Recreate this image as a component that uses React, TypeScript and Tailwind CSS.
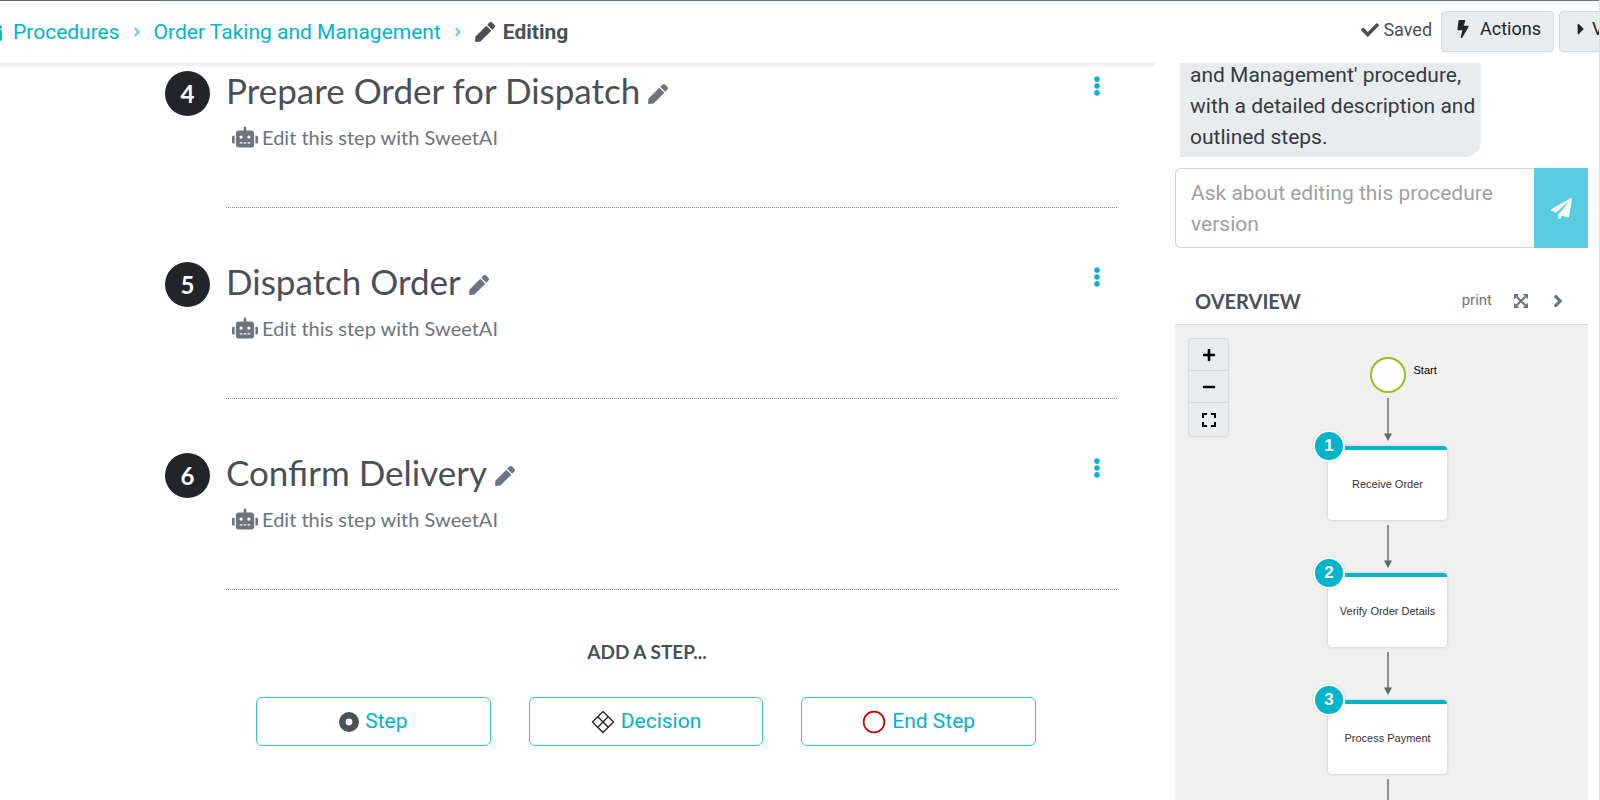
import { FaAngleRight, FaBolt, FaCalendar, FaCaretRight, FaCheck, FaEllipsisV, FaMinus, FaPaperPlane, FaPen, FaPlus, FaRobot } from 'react-icons/fa'

type Step = { number: number; title: string }

const steps: Step[] = [
  { number: 4, title: 'Prepare Order for Dispatch' },
  { number: 5, title: 'Dispatch Order' },
  { number: 6, title: 'Confirm Delivery' },
]

const overviewNodes: Step[] = [
  { number: 1, title: 'Receive Order' },
  { number: 2, title: 'Verify Order Details' },
  { number: 3, title: 'Process Payment' },
]

function StepIcon() {
  return (
    <svg className="size-5" viewBox="0 0 20 20" aria-hidden="true">
      <circle cx="10" cy="10" r="6.7" fill="none" stroke="#495057" strokeWidth="6.6" />
    </svg>
  )
}

function DecisionIcon() {
  return (
    <svg className="size-6" viewBox="0 0 24 24" fill="none" stroke="#212529" strokeWidth="1.4" aria-hidden="true">
      <path d="M12 1.5 22.5 12 12 22.5 1.5 12Z" />
      <path d="m6.8 6.8 10.4 10.4M17.2 6.8 6.8 17.2" />
    </svg>
  )
}

function EndIcon() {
  return (
    <svg className="size-6" viewBox="0 0 24 24" fill="none" aria-hidden="true">
      <circle cx="12" cy="12" r="10.4" stroke="#cc0000" strokeWidth="1.7" />
    </svg>
  )
}

function MaximizeIcon() {
  return (
    <svg className="size-3.5" viewBox="0 0 14 14" aria-hidden="true">
      <path d="M2.5 2.5l9 9M11.5 2.5l-9 9" stroke="currentColor" strokeWidth="2.1" />
      <path d="M0 0h5.2L0 5.2ZM14 0v5.2L8.8 0ZM0 14V8.8L5.2 14ZM14 14H8.8L14 8.8Z" fill="currentColor" />
    </svg>
  )
}

function FitIcon() {
  return (
    <svg className="size-3.5" viewBox="0 0 14 14" fill="none" stroke="currentColor" strokeWidth="2" aria-hidden="true">
      <path d="M1 5V1h4M9 1h4v4M13 9v4H9M5 13H1V9" />
    </svg>
  )
}

function Header() {
  return (
    <header className="shrink-0 overflow-hidden bg-white">
      <div className="flex h-px">
        <span className="w-1/10 bg-[#66666c]" />
        <span className="flex-1 bg-[#4f7f8b]" />
      </div>
      <div className="flex h-[62px] items-center">
        <nav aria-label="Breadcrumb" className="flex min-w-0 flex-1 items-center whitespace-nowrap text-[21px] leading-8 text-[#00b4cc]">
          <a href="#procedures" className="flex items-center gap-2.5">
            <FaCalendar className="-ml-[15px] size-[18px]" />
            Procedures
          </a>
          <FaAngleRight className="mx-[10px] size-3.5 opacity-60" />
          <a href="#procedure">Order Taking and Management</a>
          <FaAngleRight className="mx-[10px] size-3.5 opacity-60" />
          <span className="flex items-center gap-2 font-bold text-[#495057]">
            <FaPen className="size-5" />
            Editing
          </span>
        </nav>
        <div className="-mr-[56px] flex shrink-0 items-center gap-[5px] pb-0.5 text-lg">
          <span className="flex items-center gap-1 pr-1 pb-0.5 text-[#495057]">
            <FaCheck className="size-[18px]" />
            Saved
          </span>
          <button type="button" className="flex h-[41px] items-center gap-2 rounded border border-[#d3dae0] bg-[#e9ecef] px-3 pb-1 text-[#212529] shadow-xs">
            <FaBolt className="size-[18px]" />
            Actions
          </button>
          <button type="button" className="flex h-[41px] w-24 items-center gap-0.5 rounded border border-[#d3dae0] bg-[#e9ecef] px-3 pb-1 text-[#212529] shadow-xs">
            <FaCaretRight className="size-[18px]" />
            View
          </button>
        </div>
      </div>
    </header>
  )
}

function StepRow({ step }: { step: Step }) {
  return (
    <li className="flex gap-4">
      <span className="flex size-[45px] shrink-0 items-center justify-center rounded-full bg-[#212529] font-[Lato] text-2xl font-bold text-white">
        {step.number}
      </span>
      <div className="flex h-[137px] flex-1 justify-between border-b border-dotted border-[#868e96] font-[Lato]">
        <div>
          <h2 className="flex h-[38px] items-center gap-2 text-[35px] text-[#495057]">
            {step.title}
            <button type="button" aria-label={`Rename ${step.title}`} className="pt-2 text-[#6c757d]">
              <FaPen className="size-5" />
            </button>
          </h2>
          <button type="button" className="mt-3 flex items-center gap-1 pl-1.5 text-xl leading-8 text-[#6c757d]">
            <FaRobot className="size-[26px]" />
            Edit this step with SweetAI
          </button>
        </div>
        <button type="button" aria-label={`Options for ${step.title}`} className="mt-[3px] mr-2 flex size-6 items-center justify-center text-[#00b4cc]">
          <FaEllipsisV className="size-5" />
        </button>
      </div>
    </li>
  )
}

function AddStep() {
  return (
    <section className="mr-[26px] mt-[42px] flex flex-col items-center">
      <h3 className="font-[Lato] text-[19px] font-bold leading-10 text-[#495057]">ADD A STEP...</h3>
      <div className="mt-[25px] grid w-full grid-cols-3 gap-[38px] pl-[91px] pr-[93px] text-[21px] text-[#00b4cc]">
        <button type="button" className="flex h-[49px] items-center justify-center gap-1.5 rounded-md border border-[#35c3d6]">
          <StepIcon />
          Step
        </button>
        <button type="button" className="flex h-[49px] items-center justify-center gap-1.5 rounded-md border border-[#35c3d6]">
          <DecisionIcon />
          Decision
        </button>
        <button type="button" className="flex h-[49px] items-center justify-center gap-1.5 rounded-md border border-[#35c3d6]">
          <EndIcon />
          End Step
        </button>
      </div>
    </section>
  )
}

function Chat() {
  return (
    <div>
      {/* message list, kept at its latest lines */}
      <div className="flex h-[94px] items-end overflow-hidden pl-[5px]">
        <p className="w-[301px] rounded-br-2xl bg-[#e9ecef] pb-1 pl-2.5 text-[21px] leading-[31px] text-[#343a40]">
          and Management' procedure, with a detailed description and outlined steps.
        </p>
      </div>
      <form className="mt-[11px] flex h-20">
        <textarea
          aria-label="Ask about editing this procedure version"
          placeholder="Ask about editing this procedure version"
          className="min-w-0 flex-1 resize-none rounded-l-md border border-r-0 border-[#ced4da] px-[15px] py-[9px] text-[21px] leading-[31px] placeholder:text-[#a0a0a0]"
        />
        <button type="submit" aria-label="Send" className="flex w-[54px] items-center justify-center bg-[#59cddf] text-white">
          <FaPaperPlane className="size-[21px]" />
        </button>
      </form>
    </div>
  )
}

function Arrow() {
  return (
    <svg className="my-[5px] h-[43px] w-3" viewBox="0 0 12 43" aria-hidden="true">
      <path d="M6 0v38" stroke="#7f8886" strokeWidth="1.8" />
      <path d="M2 35.5h8L6 43Z" fill="#5f6b69" />
    </svg>
  )
}

function Overview() {
  return (
    <section className="mt-[27px] flex min-h-0 flex-1 flex-col">
      <div className="flex h-[50px] items-center border-b border-[#dcdcdc] px-5 pt-0.5 text-[#6c757d]">
        <h3 className="flex-1 font-[Lato] text-xl font-bold text-[#495057]">OVERVIEW</h3>
        <button type="button" className="text-[15px]">print</button>
        <button type="button" aria-label="Maximize" className="ml-[22px]"><MaximizeIcon /></button>
        <button type="button" aria-label="Collapse" className="ml-5"><FaAngleRight className="size-5" /></button>
      </div>
      <div className="relative min-h-0 flex-1 overflow-hidden bg-[#f0f0f0] font-['Liberation_Sans',sans-serif]">
        <div className="absolute left-[13px] top-[13px] flex w-[41px] flex-col divide-y divide-[#d3dae0] rounded border border-[#d3dae0] bg-[#e9ecef] text-black shadow-xs">
          <button type="button" aria-label="Zoom in" className="flex h-8 items-center justify-center"><FaPlus className="size-3.5" /></button>
          <button type="button" aria-label="Zoom out" className="flex h-8 items-center justify-center"><FaMinus className="size-3.5" /></button>
          <button type="button" aria-label="Fit" className="flex h-[33px] items-center justify-center"><FitIcon /></button>
        </div>
        <div className="flex flex-col items-center pl-3 pt-8 text-[11px] text-[#333]">
          <div className="relative size-9 rounded-full border-2 border-[#94c11f] bg-white">
            <span className="absolute left-[42px] top-[3px] text-black">Start</span>
          </div>
          {overviewNodes.map(node => (
            <div key={node.number} className="flex flex-col items-center">
              <Arrow />
              <div className="relative flex h-[74px] w-[119px] items-center justify-center rounded border-t-4 border-[#00b4cc] bg-white pb-0.5 shadow-[0_0_3px_#bbb]">
                <span className="absolute -left-[15px] -top-5 flex size-8 items-center justify-center rounded-full border-2 border-white bg-[#00b4cc] text-[17px] font-bold text-white shadow-[0_0_2px_#ccc]">
                  {node.number}
                </span>
                {node.title}
              </div>
            </div>
          ))}
          <Arrow />
        </div>
      </div>
    </section>
  )
}

export default function App() {
  return (
    <div className="flex h-screen flex-col overflow-hidden border-r border-[#dee2e6] bg-white font-[Roboto,sans-serif]">
      <Header />
      <div className="flex min-h-0 flex-1">
        <main className="min-w-0 flex-1 overflow-hidden pl-[165px] shadow-[inset_0_5px_4px_-3px_#e5e5e5]">
          <ol className="mr-[38px] flex flex-col gap-[54px] pt-2">
            {steps.map(step => <StepRow key={step.number} step={step} />)}
          </ol>
          <AddStep />
        </main>
        <aside className="flex w-[444px] shrink-0 flex-col overflow-hidden pl-5 pr-[11px]">
          <Chat />
          <Overview />
        </aside>
      </div>
    </div>
  )
}
